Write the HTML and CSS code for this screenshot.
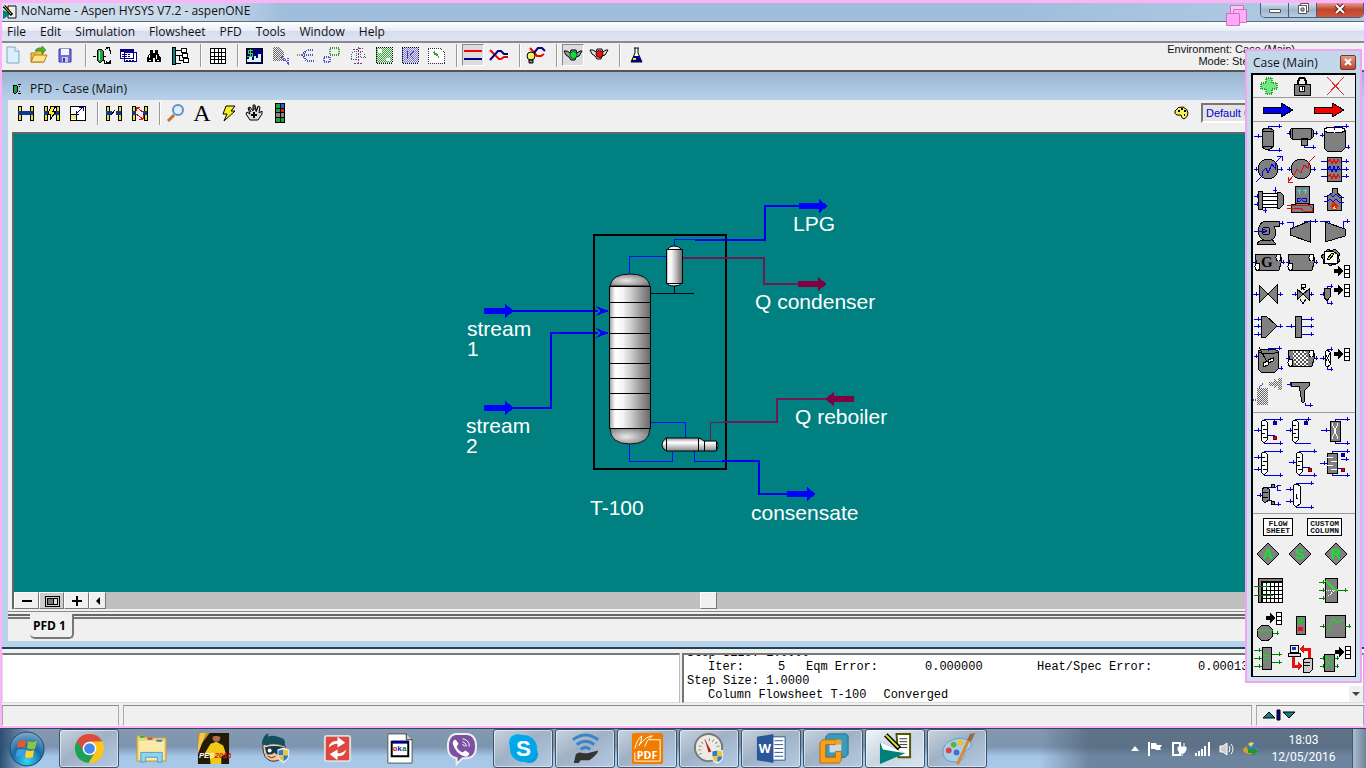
FILE: index.html
```html
<!DOCTYPE html>
<html lang="en">
<head>
    <meta charset="UTF-8">
    <meta name="viewport" content="width=device-width, initial-scale=1.0">
    <title>NoName - Aspen HYSYS V7.2 - aspenONE</title>
    <link rel="stylesheet" href="styles.css">
</head>
<body>
    <!-- Shared fills and symbols -->
    <svg class="defs" width="0" height="0" aria-hidden="true">
        <defs>
            <pattern id="dots" width="2" height="2" patternUnits="userSpaceOnUse"><path d="M0 0h1v1H0zM1 1h1v1H1z" fill="#666"/></pattern>
            <pattern id="greendots" width="2" height="2" patternUnits="userSpaceOnUse"><path d="M0 0h2v2H0z" fill="#e4f4e4"/><path d="M0 0h1v1H0zM1 1h1v1H1z" fill="#40a040"/></pattern>
            <pattern id="bluedots" width="2" height="2" patternUnits="userSpaceOnUse"><path d="M0 0h2v2H0z" fill="#e0e0f8"/><path d="M0 0h1v1H0zM1 1h1v1H1z" fill="#8080d0"/></pattern>
            <pattern id="pack" width="4" height="4" patternUnits="userSpaceOnUse"><path fill="#fff" d="M0 0h4v4H0z"/><path d="M0 0h2v2H0zM2 2h2v2H2z" fill="#555"/></pattern>
            <linearGradient id="steel" x1="0" x2="1" y1="0" y2="0">
                <stop offset="0" stop-color="#a0a0a0"/><stop offset=".14" stop-color="#fff"/><stop offset=".32" stop-color="#f4f4f4"/>
                <stop offset=".55" stop-color="#c8c8c8"/><stop offset=".8" stop-color="#909090"/><stop offset="1" stop-color="#686868"/>
            </linearGradient>
            <linearGradient id="steelv" x1="0" x2="0" y1="0" y2="1">
                <stop offset="0" stop-color="#999"/><stop offset=".35" stop-color="#fff"/><stop offset="1" stop-color="#888"/>
            </linearGradient>
            <radialGradient id="dome" cx=".4" cy=".55" r=".6"><stop offset="0" stop-color="#e8e8e8"/><stop offset="1" stop-color="#808080"/></radialGradient>
            <radialGradient id="orb" cx=".5" cy=".85" r=".9"><stop offset="0" stop-color="#35d5f5"/><stop offset=".5" stop-color="#1b6aa5"/><stop offset="1" stop-color="#8fb4d0"/></radialGradient>
            <symbol id="tocol" viewBox="0 0 16 14"><path d="M0 5h4V2l5 5-5 5V9H0z" fill="#000"/><path d="M10 1h5v12h-5zM10 5h5M10 9h5" fill="#fff" stroke="#000"/></symbol>
            <symbol id="shield" viewBox="0 0 14 16"><path d="M7 0l6 2v6q0 5-6 8-6-3-6-8V2z" fill="#e8eef4"/><path d="M7 2v6H2V3zM7 8h5q0 4-5 6z" fill="#2b7cc9"/><path d="M7 2l5 1v5H7zM2 8h5v6Q2 12 2 8z" fill="#f4c430"/></symbol>
        </defs>
    </svg>

    <div class="window">
        <header class="titlebar">
            <svg class="app-icon" width="14" height="14" viewBox="0 0 14 14"><path fill="#eee" stroke="#111" d="M5 1h8v12H5z"/><path d="M0 5l8 4-8 5z" fill="#00807a"/><path d="M1 1l8 9" stroke="#000" stroke-width="3"/><path d="M1 1l7 8" stroke="#e8e020"/></svg>
            <h1>NoName - Aspen HYSYS V7.2 - aspenONE</h1>
            <div class="caption">
                <button class="cap-btn min" aria-label="Minimize"><svg width="14" height="12" viewBox="0 0 14 12"><path d="M1.500 6.500h11v3h-11z" fill="#fff" stroke="#555"/></svg></button>
                <button class="cap-btn restore" aria-label="Restore"><svg width="14" height="12" viewBox="0 0 14 12"><path d="M4.500 .5h8v8h-8z" fill="#fff" stroke="#555"/><path d="M2.500 2.500h8v8h-8z" fill="#fff" stroke="#555"/><path d="M5 5h3v3H5z" fill="#abc" stroke="#555"/></svg></button>
                <button class="cap-btn close" aria-label="Close"><svg width="14" height="12" viewBox="0 0 14 12"><path d="M3 2l8 8M11 2l-8 8" stroke="#5a2020" stroke-width="4"/><path d="M3 2l8 8M11 2l-8 8" stroke="#fff" stroke-width="2"/></svg></button>
            </div>
        </header>

        <nav class="menubar">
            <button>File</button>
            <button>Edit</button>
            <button>Simulation</button>
            <button>Flowsheet</button>
            <button>PFD</button>
            <button>Tools</button>
            <button>Window</button>
            <button>Help</button>
        </nav>

        <div class="toolbar">
            <button class="tool" aria-label="New"><svg viewBox="0 0 20 20"><path d="M4 2h8l4 4v12H4z" fill="#dceefb" stroke="#7aa6cc"/><path d="M12 2v4h4" fill="#fff" stroke="#7aa6cc"/></svg></button>
            <button class="tool" aria-label="Open"><svg viewBox="0 0 20 20"><path d="M2 8h5l1-2h6v11H2z" fill="#f5c542" stroke="#b07f10"/><path d="M2 17l3-7h13l-3 7z" fill="#ffe38a" stroke="#b07f10"/><path d="M6 6q2-4 7-3V1l4 4-4 4V6q-4-1-7 0z" fill="#4db030" stroke="#2b7a1a" stroke-width=".6"/></svg></button>
            <button class="tool" aria-label="Save"><svg viewBox="0 0 20 20"><path d="M4 4h12v13H4z" fill="#7070d8" stroke="#3838a0"/><path d="M6 4h8v6H6z" fill="#f4f4ff"/><path d="M7 12h6v5H7z" fill="#c8c8e8"/><path d="M8 13h2v4H8z" fill="#3838a0"/></svg></button>
            <span class="sep"></span>
            <button class="tool" aria-label="PFD"><svg class="px" viewBox="0 0 20 20"><path d="M1 11h3M11 11h3M13 5l4-3m-3 0h3v3h1v4M9 15h3v3h6v-3m0 4" class="ink"/><path d="M5 6l2-2h2l2 2v9l-2 2H7l-2-2z" fill="#20a040" stroke="#000"/><path d="M7 6v9" stroke="#bfffbf"/><path d="M14 16l4 3v-3l-4 3z" fill="#000"/></svg></button>
            <button class="tool" aria-label="Workbook"><svg class="px" viewBox="0 0 20 20"><path d="M6 7h12v9H6zM2 4h13v9H2z" fill="#fff" stroke="#000080"/><path d="M2 4h13v3H2z" fill="#000080"/><path d="M4 9h9M4 11h9M8 15h8" stroke="#000080" stroke-dasharray="2 1"/></svg></button>
            <button class="tool" aria-label="Find"><svg class="px" viewBox="0 0 20 20"><path d="M6 5h3v3h2V5h3v3l3 5v4h-6v-4H9v4H3v-4l3-5z" fill="#000"/><path d="M6 10l-1 3M12 10v4M5 15h2M13 15h2" stroke="#fff"/></svg></button>
            <button class="tool" aria-label="Navigator"><svg class="px" viewBox="0 0 20 20"><path d="M2 2h3v17H2z" fill="#008b8b" stroke="#000"/><path d="M5 5h6M5 10h4v5h5M9 10h3M5 18h6" class="ink"/><path d="M11 3h5v4h-5zM12 8h5v4h-5zM13 13h5v4h-5z" fill="#fff" stroke="#000"/></svg></button>
            <span class="sep"></span>
            <button class="tool" aria-label="Grid"><svg class="px" viewBox="0 0 20 20"><path d="M3 3h15v15H3zM7 3v15M11 3v15M14 3v15M3 7h15M3 11h15M3 14h15" fill="#fff" stroke="#000"/></svg></button>
            <span class="sep"></span>
            <button class="tool" aria-label="Economics"><svg class="px" viewBox="0 0 20 20"><path d="M2 3h16v15H2z" fill="#000080" stroke="#000"/><path d="M9 5H4v3h4v3H3M6 4v8" stroke="#30e030" fill="none"/><path d="M3 17v-3h2v-2h3v3h2v-4h2v2h2V9h3v8z" fill="#dff4f4"/></svg></button>
            <button class="tool" aria-label="Stop sizing"><svg class="px" viewBox="0 0 20 20"><path d="M3 2h7l4 5v9H3z" fill="url(#dots)"/><path d="M12 12l6 6v-5" class="bdot"/></svg></button>
            <button class="tool" aria-label="Split"><svg class="px" viewBox="0 0 20 20"><path d="M1 10h5" class="odot"/><path d="M6 10l5-5h7M6 10h12M6 10l5 6h7" class="bdot"/></svg></button>
            <button class="tool" aria-label="Link"><svg class="px" viewBox="0 0 20 20"><path d="M8 3h9v7H8z" class="gdot"/><path d="M2 12h6v5H2z" class="bdot"/></svg></button>
            <button class="tool" aria-label="Balance"><svg class="px" viewBox="0 0 20 20"><path d="M10 2v16M5 5l10-2M6 18h8" stroke="#704080" stroke-dasharray="2 1" fill="none"/><path d="M3 14q0-8 5-8v8zM12 6q5 0 5 6h-5z" stroke="#555590" stroke-dasharray="1 1" fill="none"/></svg></button>
            <button class="tool" aria-label="Heat"><svg class="px" viewBox="0 0 20 20"><path d="M2 2h16v16H2z" fill="url(#greendots)" stroke="#000" stroke-dasharray="1 1"/><path d="M4 4h4v4H4zM12 13h4v3h-4z" fill="#fff"/></svg></button>
            <button class="tool" aria-label="Rewind"><svg class="px" viewBox="0 0 20 20"><path d="M2 2h16v16H2z" fill="url(#bluedots)" stroke="#000" stroke-dasharray="1 1"/><path d="M7 6v8M14 6l-4 4 4 4" stroke="#4040b0" fill="none"/></svg></button>
            <button class="tool" aria-label="Case file"><svg class="px" viewBox="0 0 20 20"><path d="M2 3h12l4 4v11H2z" fill="#fff" stroke="#333" stroke-dasharray="1 1"/><path d="M8 7l5 5M8 9h3l2 4" class="gdot"/></svg></button>
            <span class="sep"></span>
            <button class="tool pressed" aria-label="Steady state"><svg viewBox="0 0 20 20"><path d="M1 6h18" stroke="#f00000" stroke-width="2"/><path d="M1 14h18" stroke="#000080" stroke-width="2"/></svg></button>
            <button class="tool" aria-label="Dynamics"><svg viewBox="0 0 20 20"><path d="M1 5l9 9h2l3-2h4" fill="none" stroke="#f00000" stroke-width="2"/><path d="M1 15l8-9h3l3 3h4" fill="none" stroke="#000080" stroke-width="2"/></svg></button>
            <span class="sep"></span>
            <button class="tool" aria-label="Dynamics assistant"><svg viewBox="0 0 20 20"><path d="M4 3l7 8h4l3-2" fill="none" stroke="#f00000" stroke-width="2"/><path d="M7 9l5-6h4l3 3" fill="none" stroke="#000080" stroke-width="2"/><circle cx="5" cy="11" r="4" fill="#f0f060" stroke="#000"/><path d="M3 15h4v3H3z" fill="#888" stroke="#000"/></svg></button>
            <span class="sep"></span>
            <button class="tool pressed" aria-label="Solver active"><svg viewBox="0 0 20 20"><path d="M1 6h3l3 2 1-3h5l1 3 3-2h2l-3 5-3 1-1 3H8l-2-3-3-2z" fill="#999" stroke="#000"/><circle cx="10.500" cy="10" r="3.500" fill="#10e030" stroke="#063"/></svg></button>
            <button class="tool" aria-label="Solver holding"><svg viewBox="0 0 20 20"><path d="M1 5h3l3 2 1-3h5l1 3 3-2h2l-3 5-3 1-1 3H8l-2-3-3-2z" fill="#ddd" stroke="#000"/><circle cx="10.500" cy="9" r="3.500" fill="#e81010" stroke="#500"/></svg></button>
            <span class="sep"></span>
            <button class="tool" aria-label="Basis environment"><svg viewBox="0 0 20 20"><path d="M8 3h5M9 3v5l-4 9h11l-4-9V3" fill="#fff" stroke="#000"/><path d="M8 11h5l3 6H5z" fill="#000080"/><path d="M7 13h3v2H7z" fill="#f0e020"/></svg></button>
            <div class="env">
                <div>Environment: Case (Main)</div>
                <div>Mode: Steady State</div>
            </div>
        </div>

        <!-- PFD child window -->
        <section class="child">
            <div class="child-title">
                <svg class="px" width="12" height="12" viewBox="0 0 12 12"><path d="M2 3l1-1h2l1 1v6l-1 1H3L2 9z" fill="#20a040" stroke="#000"/><path d="M7 1h3M8 3h1M7 10h3M8 8h1" class="ink"/></svg>
                <h2>PFD - Case (Main)</h2>
            </div>
            <div class="child-body">
                <div class="toolbar pfd-toolbar">
                    <button class="tool" aria-label="Attach mode"><svg class="px" viewBox="0 0 20 20"><path d="M2 3h3v14H2zM14 3h3v14h-3z" fill="#e8e020" stroke="#000"/><path d="M2 8h15v4H2z" fill="#103890"/></svg></button>
                    <button class="tool" aria-label="Auto attach"><svg class="px" viewBox="0 0 20 20"><path d="M2 3h3v14H2zM14 3h3v14h-3z" fill="#e8e020" stroke="#000"/><path d="M2 8h15v4H2z" fill="#103890"/><path d="M9 3h5l-3 5h3l-6 9 1-6H6z" fill="#f8f030" stroke="#000"/></svg></button>
                    <button class="tool" aria-label="Size mode"><svg class="px" viewBox="0 0 20 20"><path d="M2 3h15v14H2zM2 11h6v6" fill="#fff" stroke="#000"/><path d="M3 12h5v4H3z" fill="#f0e860"/><path d="M8 11l7-7m-4 0h4v4M8 8v3h3" fill="none" stroke="#000080"/></svg></button>
                    <span class="sep"></span>
                    <button class="tool" aria-label="Break connection"><svg class="px" viewBox="0 0 20 20"><path d="M2 3h3v14H2zM14 3h3v14h-3z" fill="#e8e020" stroke="#000"/><path d="M2 8h6v4H2zM12 8h5v4h-5z" fill="#103890"/><path d="M7 12l4-5" stroke="#000"/></svg></button>
                    <button class="tool" aria-label="Swap connections"><svg class="px" viewBox="0 0 20 20"><path d="M2 3h3v14H2zM14 3h3v14h-3z" fill="#e8e020" stroke="#000"/><path d="M2 8h4v4H2zM13 8h4v4h-4z" fill="#103890"/><path d="M6 4l7 5M6 4v4M6 4h4M13 16l-7-5M13 16v-4M13 16H9" fill="none" stroke="#e01010"/></svg></button>
                    <span class="sep"></span>
                    <button class="tool" aria-label="Zoom"><svg viewBox="0 0 20 20"><path d="M2 18l6-6" stroke="#c07030" stroke-width="3"/><circle cx="12" cy="7" r="5" fill="#d8f0ff" stroke="#6890c0" stroke-width="2"/></svg></button>
                    <button class="tool letter" aria-label="Add text">A</button>
                    <button class="tool" aria-label="Quick route"><svg viewBox="0 0 20 20"><path d="M8 3h9l-4 5h4L6 18l3-7H5z" fill="#f8f020" stroke="#000"/></svg></button>
                    <button class="tool" aria-label="Pan"><svg viewBox="0 0 20 20"><path d="M6 17l-4-6 1-2 3 2-2-6 2-1 3 4V2h2l1 6 2-5 2 1-1 6 3-2v3l-4 6z" fill="#ddd" stroke="#000"/><path d="M10 3v4M5 5l2 4M14 4l-2 5" stroke="#000"/><path d="M10 9v6M7 12h6" stroke="#000" stroke-width="2"/></svg></button>
                    <button class="tool" aria-label="Colour blocks"><svg class="px" viewBox="0 0 20 20"><path d="M5 0h10v20H5z" fill="#000"/><path d="M6 1h4v4H6zM6 6h4v3H6z" fill="#20a040"/><path d="M11 1h3v4h-3z" fill="#2060d0"/><path d="M11 6h3v3h-3z" fill="#e02020"/><path d="M6 10h4v4H6zM11 10h3v4h-3z" fill="#888"/><path d="M6 15h4v4H6zM11 15h3v4h-3z" fill="#20a040"/></svg></button>
                    <div class="scheme">
                        <svg width="16" height="16" viewBox="0 0 16 16"><path d="M2 6q3-5 8-4 5 2 5 6t-4 6q-3-1-3-4-7 1-6-4z" fill="#f4f060" stroke="#000"/><path d="M5 6h2M8 4h2M11 6h2M11 10h1" stroke="#000" stroke-width="2"/></svg>
                        <select aria-label="Colour scheme"><option>Default Colour Scheme</option></select>
                    </div>
                </div>

                <div class="canvas">
                    <svg class="flow" width="440" height="340" viewBox="460 190 440 340" role="img" aria-label="Process flow diagram">
                        <g class="px">
                            <!-- inlet streams -->
                            <path class="stream" d="M512 311h86M512 408h39v-75h47"/>
                            <path class="head" d="M484 308h21v-4l9 7-9 7v-4h-21zM484 405h21v-4l9 7-9 7v-4h-21z"/>
                            <!-- column environment -->
                            <path class="frame" d="M594 235h132v234H594z"/>
                            <path class="head" d="M596 306l13 5-13 5 4-5zM596 328l13 5-13 5 4-5z"/>
                            <path class="inner" d="M629.500 274v-17.500h37M674.500 247v-7.500h21M651 422.500h34.500v16M629.500 444v17.500h43v-10M694.500 451v10.500h29"/>
                            <path class="stream" d="M695 240h70v-34h35M722 461h37v33h30"/>
                            <path class="energy" d="M682 258h82v26h36M723 422h54v-23h50"/>
                            <path class="energy thin" d="M710.500 440v-17.500h14"/>
                            <path class="head" d="M799 203h20v-4l9 7-9 7v-4h-20zM787 491h20v-4l9 7-9 7v-4h-20z"/>
                            <path class="qhead" d="M798 281h20v-4l9 7-9 7v-4h-20zM854 396h-20v-4l-9 7 9 7v-4h20z"/>
                            <path class="ink" d="M651 293.500h43M674.500 285v8"/>
                        </g>
                        <!-- tower -->
                        <path d="M610 286q2-12 20-12t20 12z" fill="url(#dome)" stroke="#111"/>
                        <path d="M610 428q0 16 20 16t20-16z" fill="url(#dome)" stroke="#111"/>
                        <path d="M609.500 286.500h41v142h-41z" fill="url(#steel)" stroke="#000"/>
                        <path class="px" d="M610 302.500h41M610 317.500h41M610 333.500h41M610 348.500h41M610 363.500h41M610 378.500h41M610 393.500h41M610 409.500h41" stroke="#000"/>
                        <!-- condenser and reboiler -->
                        <path d="M668 249q1-3 6-3t7 3l1 34q-2 3-8 3t-7-3z" fill="#eee" stroke="#000"/>
                        <path d="M666.500 249.500h16v34h-16z" fill="url(#steel)" stroke="#000"/>
                        <path d="M666 438h32q3 0 6 3h12q4 4 0 10h-50q-8-6 0-13z" fill="url(#steelv)" stroke="#000"/>
                        <path d="M666.500 438v13M698.500 438v13M704.500 441v10M716.500 441v10" stroke="#000"/>
                        <g class="labels">
                            <text x="467" y="336">stream</text><text x="467" y="356">1</text>
                            <text x="466" y="433">stream</text><text x="466" y="453">2</text>
                            <text x="793" y="231">LPG</text>
                            <text x="755" y="309">Q condenser</text>
                            <text x="795" y="424">Q reboiler</text>
                            <text x="590" y="515">T-100</text>
                            <text x="751" y="520">consensate</text>
                        </g>
                    </svg>
                </div>

                <div class="hscroll">
                    <button aria-label="Zoom out"><svg class="px" width="12" height="12" viewBox="0 0 12 12"><path d="M1 5h10v2H1z"/></svg></button>
                    <button aria-label="Zoom all" class="overview"><svg class="px" width="16" height="12" viewBox="0 0 16 12"><path d="M1 1h14v10H1z" fill="#ccc" stroke="#000"/><path d="M3 3h6v6H3z" fill="#777" stroke="#000"/><path d="M9 3h4v6H9z" fill="#ddd" stroke="#000"/></svg></button>
                    <button aria-label="Zoom in"><svg class="px" width="12" height="12" viewBox="0 0 12 12"><path d="M1 5h4V1h2v4h4v2H7v4H5V7H1z"/></svg></button>
                    <button aria-label="Scroll left" class="small"><svg width="8" height="8" viewBox="0 0 8 8"><path d="M6 0v8L2 4z"/></svg></button>
                    <div class="track"><span class="thumb"></span></div>
                </div>
                <div class="tabs">
                    <button class="tab">PFD 1</button>
                </div>
            </div>
        </section>

        <div class="panes">
            <div class="pane messages"></div>
            <div class="pane trace">
                <div class="line">Step Size: 1.0000</div>
                <div class="line cols"><span>Iter:</span><span>5</span><span>Eqm Error:</span><span>0.000000</span><span>Heat/Spec Error:</span><span>0.000133</span></div>
                <div class="line">Step Size: 1.0000</div>
                <div class="line indent"><span>Column Flowsheet T-100</span><span>Converged</span></div>
                <button class="vdown" aria-label="Scroll down"><svg width="8" height="4" viewBox="0 0 8 4"><path d="M0 0h8L4 4z" fill="#444"/></svg></button>
            </div>
        </div>

        <footer class="status">
            <div class="cell short"></div>
            <div class="cell wide"></div>
            <div class="cell arrows"><svg width="34" height="12" viewBox="0 0 34 12"><path d="M1 9h12L7 3zM21 3h12l-6 6z" fill="#108080" stroke="#000"/><path d="M15 1h3v10h-3z" fill="#000080" stroke="#000"/></svg></div>
        </footer>
    </div>

    <!-- Window marker over the title bar -->
    <svg class="marker" width="22" height="22" viewBox="0 0 22 22"><path d="M4.500 .5h13v13h-13z" fill="#fbc4f4" stroke="#d070c8"/><path d="M7.500 4.500h13v13h-13z" fill="#fbb0f4" stroke="#d070c8"/><path d="M.5 8.500h13v12H.5z" fill="#ffa8f8" stroke="#d070c8"/></svg>

    <!-- Object palette -->
    <aside class="palette">
        <div class="palette-title">
            <h2>Case (Main)</h2>
            <button class="palette-close" aria-label="Close palette"><svg width="8" height="8" viewBox="0 0 8 8"><path d="M1 1l6 6M7 1L1 7" stroke="#fff" stroke-width="2"/></svg></button>
        </div>
        <div class="palette-body px">
            <div class="group edit">
                <button aria-label="Add"><svg width="32" height="22" viewBox="0 0 32 22"><path d="M13 3h6v5h5v6h-5v5h-6v-5H8V8h5z" fill="#70e880"/><path d="M13 3h6v5h5v6h-5v5h-6v-5H8V8h5z" class="gdot"/></svg></button>
                <button aria-label="Lock"><svg width="32" height="22" viewBox="0 0 32 22"><path d="M12 10V6l2-3h4l2 3v4" fill="none" stroke="#000" stroke-width="2"/><path d="M8 9h16v11H8z" fill="#808080" stroke="#000"/><circle cx="16" cy="14" r="3" fill="#fff" stroke="#000"/><path d="M16 12v3" stroke="#000"/></svg></button>
                <button aria-label="Delete"><svg width="32" height="22" viewBox="0 0 32 22"><path d="M8 2l17 18M25 2L8 20" stroke="#d03030"/></svg></button>
            </div>
            <div class="group streams">
                <button aria-label="Material stream"><svg width="34" height="16" viewBox="0 0 34 16"><path d="M1 5h18V1l12 7-12 7v-4H1z" fill="#0000e8" stroke="#000"/></svg></button>
                <button aria-label="Energy stream"><svg width="34" height="16" viewBox="0 0 34 16"><path d="M1 5h18V1l12 7-12 7v-4H1z" fill="#f80000" stroke="#000"/></svg></button>
            </div>
            <div class="group units">
                <button aria-label="Separator"><svg width="32" height="32" viewBox="0 0 32 32"><path class="pipe" d="M1 14h8m-4-2v4M15 6V4h14m-3-2v4M15 27v1h14m-3-2v4"/><path class="unit" d="M9 8l3-2h5l3 2v17l-3 2h-5l-3-2zM9 9h11M9 24h11"/></svg></button>
                <button aria-label="3-phase separator"><svg width="32" height="32" viewBox="0 0 32 32"><path class="pipe" d="M1 11h5m-3-2v4M27 11h5m-2-2v4M18 23v2h12m-3-2v4"/><path class="unit" d="M15 16h6v7h-6zM4 8l2-2h19l2 2v7l-2 2H6l-2-2zM6 6v11M25 6v11"/></svg></button>
                <button aria-label="Tank"><svg width="32" height="32" viewBox="0 0 32 32"><path class="unit" d="M5 8v18l3 3h15l3-3V8z"/><ellipse cx="15.500" cy="8" rx="10.500" ry="3" fill="#fff" stroke="#000"/><path class="pipe" d="M1 13h4m-2-2v4M15 8V4h15m-3-2v4M26 25h5m-2-2v4"/></svg></button>

                <button aria-label="Cooler"><svg width="32" height="32" viewBox="0 0 32 32"><circle class="unit" cx="15" cy="16" r="10"/><path class="pipe" d="M1 16h4m-2-2v4M25 16h5m-2-2v4M3 29l6-6v-4l4-4 2 5 4-9 3 4v-5l7-7m-5 0h5v5"/></svg></button>
                <button aria-label="Heater"><svg width="32" height="32" viewBox="0 0 32 32"><circle class="unit" cx="15" cy="16" r="10"/><path class="pipe" d="M1 16h4m-2-2v4M25 16h5m-2-2v4"/><path class="hot" d="M29 3l-7 7v5l-4-3-3 8-4-4-3 6-6 7m0-5v5h5"/></svg></button>
                <button aria-label="LNG exchanger"><svg width="32" height="32" viewBox="0 0 32 32"><path class="unit" d="M8 4h14v24H8z"/><path class="pipe" d="M2 8h6M22 8h8m-3-2v4M2 16h28m-3-2v4M2 23h6M22 23h8m-3-2v4M9 16l2-3 2 6 2-6 2 6 2-6 2 4"/><path class="hot" d="M9 9l2-3 2 5 2-5 2 5 2-5 2 4M9 24l2-3 2 5 2-5 2 5 2-5 2 4"/></svg></button>

                <button aria-label="Heat exchanger"><svg width="32" height="32" viewBox="0 0 32 32"><path class="pipe" d="M1 12h5m-2-2v4M1 20h5m-2-2v4M22 3v6m-2-3h4M12 23v6m-2-3h4"/><path class="unit" d="M5 7h4v18H5zM24 8h3l3 3v10l-3 3h-3z"/><path d="M9 9h15v14H9z" fill="#fff" stroke="#000"/><path class="ink" d="M9 12h15M9 16h15M9 20h15"/></svg></button>
                <button aria-label="Air cooler"><svg width="32" height="32" viewBox="0 0 32 32"><path class="unit" d="M9 2h13v18h5v8H5v-8h4z"/><path class="unit" d="M9 2h14v17H9z"/><path d="M13 10V5m-2 1h4M19 10V5m-2 1h4" stroke="#30e0f0" fill="none"/><path class="pipe" d="M11 14h3l3 3h3v-3h-3l-3 3h-3z"/><path class="hot" d="M1 21h22l3 3v3h-9l-2-3H1"/></svg></button>
                <button aria-label="Fired heater"><svg width="32" height="32" viewBox="0 0 32 32"><path class="unit" d="M13 4h5v5l4 3v14H8V12l5-3z"/><path class="pipe" d="M5 12h4l2-2 3 3 3-3 3 3h5M5 17h4l2-2 3 3 3-3 3 3h5"/><path d="M15 17l4 5-2 4h-3l-2-4z" fill="#e82010"/><path d="M15 21l2 4h-3z" fill="#ffe030"/></svg></button>

                <button aria-label="Pump"><svg width="32" height="32" viewBox="0 0 32 32"><path class="unit" d="M7 26L4 28v1h18v-1l-3-4z"/><path class="unit" d="M13 6h13v5h-5q3 7 0 12-4 4-10 2-5-2-6-9 1-9 8-10z"/><circle class="unit" cx="13" cy="16" r="4"/><path class="pipe" d="M1 16h13m-4-2l4 2-4 2M26 8h5m-2-2v4"/></svg></button>
                <button aria-label="Compressor"><svg width="32" height="32" viewBox="0 0 32 32"><path class="unit" d="M4 14l20-8v21L4 20z"/><path class="pipe" d="M1 7h6v6M18 8V6h14m-3-2v4"/></svg></button>
                <button aria-label="Expander"><svg width="32" height="32" viewBox="0 0 32 32"><path class="unit" d="M6 7l20 7v7L6 27z"/><path class="pipe" d="M1 6h9v3M24 13V6h7m-3-2v4"/></svg></button>

                <button aria-label="Gas pipe"><svg width="32" height="32" viewBox="0 0 32 32"><path class="pipe" d="M0 15h4m-2-2v4M27 15h5m-2-2v4"/><path class="unit" d="M3 7h23l2 3v6l-2 7H3l-1-4 2-3-2-6z"/><ellipse cx="4.500" cy="19.500" rx="2.500" ry="3.500" fill="#fff" stroke="#000"/><ellipse cx="25.500" cy="10.500" rx="2.500" ry="3.500" fill="#fff" stroke="#000"/><text x="8" y="20" class="glyph">G</text></svg></button>
                <button aria-label="Pipe segment"><svg width="32" height="32" viewBox="0 0 32 32"><path class="pipe" d="M0 15h4m-2-2v4M27 15h5m-2-2v4"/><path class="unit" d="M3 7h23l2 3v6l-2 7H3l-1-4 2-3-2-6z"/><ellipse cx="4.500" cy="19.500" rx="2.500" ry="3.500" fill="#fff" stroke="#000"/><ellipse cx="25.500" cy="10.500" rx="2.500" ry="3.500" fill="#fff" stroke="#000"/></svg></button>
                <button aria-label="Piping sub-palette"><svg width="32" height="32" viewBox="0 0 32 32"><path d="M9 2l3 2 4-2 5 5-2 3 2 4-4 3h-3l-3 2-3-3H4v-4L2 9l3-2z" fill="#808080" stroke="#000"/><path d="M5 4h9l4 3v9H5z" fill="#fff" stroke="#000"/><path d="M8 12l5-6 2 1-5 6z" fill="#f0e040" stroke="#000"/><use href="#tocol" x="15" y="17" width="16" height="14"/></svg></button>

                <button aria-label="Valve"><svg width="32" height="32" viewBox="0 0 32 32"><path class="pipe" d="M0 15h6m-3-2v4M24 15h6m-3-2v4"/><path class="unit" d="M6 6l9 9-9 9zM24 6l-9 9 9 9z"/></svg></button>
                <button aria-label="Relief valve"><svg width="32" height="32" viewBox="0 0 32 32"><path class="pipe" d="M6 15h6m-3-2v4M22 15h6m-3-2v4"/><path class="unit" d="M11 10l6 5-6 6zM23 10l-6 5 6 6z"/><path class="ink" d="M15 11V5h4v3h-4l4 3M14 20l3 5 3-5"/></svg></button>
                <button aria-label="Solids sub-palette"><svg width="32" height="32" viewBox="0 0 32 32"><path class="pipe" d="M1 15h5m-2-2v4M8 9V7h6m-2-2v4M8 22v2h6m-2-2v4"/><path class="unit" d="M5 9h6v9l-3 4-3-4z"/><use href="#tocol" x="15" y="4" width="16" height="14"/></svg></button>

                <button aria-label="Mixer"><svg width="32" height="32" viewBox="0 0 32 32"><path class="pipe" d="M1 8h7m-3-2v4M1 15h7m-3-2v4M1 23h7m-3-2v4M23 15h7m-3-2v4"/><path class="unit" d="M8 5h5l10 9v2l-10 10H8z"/></svg></button>
                <button aria-label="Tee"><svg width="32" height="32" viewBox="0 0 32 32"><path class="pipe" d="M0 15h9m-4-2v4M15 8h13m-3-2v4M15 15h13m-3-2v4M15 23h13m-3-2v4"/><path class="unit" d="M9 5h6v21H9z"/></svg></button>
                <span></span>

                <button aria-label="CSTR"><svg width="32" height="32" viewBox="0 0 32 32"><path class="unit" d="M5 8v18l3 3h14l3-3V8l-4-2H9z"/><path class="pipe" d="M1 13h4m-2-2v4M15 8V5h14m-3-2v4M25 25h5m-2-2v4"/><path class="ink" d="M6 4l8 15M5 9q10 4 20 0"/><path d="M10 20l5-2v4l-5 2zM15 17l5-2v3l-5 2z" fill="#fff" stroke="#000"/></svg></button>
                <button aria-label="Plug flow reactor"><svg width="32" height="32" viewBox="0 0 32 32"><path class="pipe" d="M0 15h4m-2-2v4M27 15h5m-2-2v4"/><path class="unit" d="M3 7h23l2 3v6l-2 7H3l-1-4 2-3-2-6z"/><path d="M7 8h12l3 6v9H10l-3-7z" fill="url(#pack)"/><ellipse cx="4.500" cy="19.500" rx="2.500" ry="3.500" fill="#fff" stroke="#000"/><ellipse cx="25.500" cy="10.500" rx="2.500" ry="3.500" fill="#fff" stroke="#000"/></svg></button>
                <button aria-label="Reactor sub-palette"><svg width="32" height="32" viewBox="0 0 32 32"><path class="pipe" d="M1 15h5m-2-2v4M8 8V6h6m-2-2v4M8 24v2h6m-2-2v4"/><path d="M6 9l2-2 3 2v13l-3 2-2-2z" fill="#fff" stroke="#000"/><path class="ink" d="M6 10l5 10M11 10L6 20"/><use href="#tocol" x="15" y="4" width="16" height="14"/></svg></button>

                <button aria-label="Electrolyte"><svg width="32" height="32" viewBox="0 0 32 32"><path d="M4 12h11v17H4zM16 6h5V3l5 5-5 5v-3h-5zM25 2h4v12h-4z" fill="url(#dots)"/><path class="bdot" d="M0 24h4M6 11l4-3"/></svg></button>
                <button aria-label="Flare tip"><svg width="32" height="32" viewBox="0 0 32 32"><path class="pipe" d="M1 8h6m-3-2v4M19 27v2h8m-3-2v4"/><path class="unit" d="M5 6h18v4l-4 4-1 12h-2l-3-16H5z"/></svg></button>
                <span></span>
            </div>
            <div class="group columns">
                <button aria-label="Distillation column"><svg width="32" height="32" viewBox="0 0 32 32"><path class="pipe" d="M1 15h7m-3-2v4M11 6V4h19m-3-2v4M14 20h7v4M11 26v2h19m-3-2v4M21 5v3"/><path class="tower" d="M8 7l2-2h2l2 2v18l-2 2h-2l-2-2zM8 10h4M10 14h4M8 18h4M10 22h4"/><circle class="cold-dot" cx="22" cy="8" r="2"/><circle class="hot-dot" cx="22" cy="23" r="2"/></svg></button>
                <button aria-label="Refluxed absorber"><svg width="32" height="32" viewBox="0 0 32 32"><path class="pipe" d="M0 15h7m-3-2v4M9 6V4h16m-3-2v4M9 26v2h16M20 5v3"/><path class="tower" d="M6 7l2-2h2l2 2v18l-2 2H8l-2-2zM6 10h4M8 14h4M6 18h4M8 22h4"/><circle class="cold-dot" cx="20" cy="8" r="2"/></svg></button>
                <button aria-label="Short cut column"><svg width="32" height="32" viewBox="0 0 32 32"><path class="pipe" d="M2 15h9m-4-2v4M16 6V4h15m-3-2v4M16 26v2h15m-3-2v4"/><path class="unit" d="M11 6h10v20H11z"/><path d="M13 8l6 16M19 8l-6 16" stroke="#fff"/></svg></button>

                <button aria-label="Absorber"><svg width="32" height="32" viewBox="0 0 32 32"><path class="pipe" d="M1 10h7m-3-2v4M1 22h7m-3-2v4M11 6V4h19m-3-2v4M11 26v2h19m-3-2v4"/><path class="tower" d="M8 7l2-2h2l2 2v18l-2 2h-2l-2-2zM8 10h4M10 14h4M8 18h4M10 22h4"/></svg></button>
                <button aria-label="Reboiled absorber"><svg width="32" height="32" viewBox="0 0 32 32"><path class="pipe" d="M3 15h7m-3-2v4M13 6V4h18m-3-2v4M16 20h7v4M13 26v2h18m-3-2v4"/><path class="tower" d="M10 7l2-2h2l2 2v18l-2 2h-2l-2-2zM10 10h4M12 14h4M10 18h4M12 22h4"/><circle class="hot-dot" cx="24" cy="23" r="2"/></svg></button>
                <button aria-label="3-phase distillation"><svg width="32" height="32" viewBox="0 0 32 32"><path class="pipe" d="M1 16h7m-3-2v4M13 6V4h18m-3-2v4M22 12h8m-3-2v4M18 21h8M13 26v2h18m-3-2v4"/><path class="unit" d="M8 6h10v20H8z"/><path d="M8 10h6M12 14h6M8 18h6M12 22h6" stroke="#fff"/><circle class="cold-dot" cx="24" cy="8" r="2"/><circle class="hot-dot" cx="24" cy="23" r="2"/></svg></button>

                <button aria-label="Component splitter"><svg width="32" height="32" viewBox="0 0 32 32"><path class="pipe" d="M4 16h6m-3-2v4M14 8h9l3-2h2m-4 0v5h4M15 21h3v4h10m-3-2v4"/><path class="unit" d="M9 10l3-2 4 2v11l-4 3-3-3zM9 13h6M9 18h6"/><circle class="unit" cx="20" cy="7" r="2"/><circle class="unit" cx="20" cy="24" r="2"/></svg></button>
                <button aria-label="Liquid-liquid extractor"><svg width="32" height="32" viewBox="0 0 32 32"><path class="pipe" d="M0 10h7m-3-2v4M0 22h7m-3-2v4M10 6V4h18m-3-2v4M10 26v2h18m-3-2v4"/><path class="tower" d="M7 7l2-2h2l3 2v18l-3 2H9l-2-2zM10 15v4h2"/></svg></button>
                <span></span>
            </div>
            <div class="group logical">
                <div class="pair">
                    <button class="sheet">FLOW<br>SHEET</button>
                    <button class="sheet">CUSTOM<br>COLUMN</button>
                </div>
                <button aria-label="Adjust"><svg width="32" height="32" viewBox="0 0 32 32"><path class="unit" d="M15 5l11 11-11 11L4 16z"/><text class="green-letter" x="15" y="21">A</text></svg></button>
                <button aria-label="Set"><svg width="32" height="32" viewBox="0 0 32 32"><path class="unit" d="M14 5l11 11-11 11L3 16z"/><text class="green-letter" x="14" y="21">S</text></svg></button>
                <button aria-label="Recycle"><svg width="32" height="32" viewBox="0 0 32 32"><path class="unit" d="M17 5l11 11-11 11L6 16z"/><text class="green-letter" x="17" y="21">R</text></svg></button>

                <button aria-label="Spreadsheet"><svg width="32" height="32" viewBox="0 0 32 32"><path d="M5 4h24v24H5z" fill="#fff" stroke="#000"/><path class="ink" d="M9 4v24M13 4v24M17 4v24M21 4v24M25 4v24M5 8h24M5 12h24M5 16h24M5 20h24M5 24h24"/><path class="unit" d="M5 4h24v3H8v21H5z"/><path class="sig" d="M1 12h15m-3-2v4M1 21h19m-3-2v4"/></svg></button>
                <span></span>
                <button aria-label="Selector"><svg width="32" height="32" viewBox="0 0 32 32"><path class="sig" d="M0 8h6m-2-2v4M0 16h6m-2-2v4M0 24h6m-2-2v4M18 16h11m-3-2v4"/><path class="unit" d="M6 4h12v24H6z"/><path d="M7 7l9 9h3" stroke="#20e030" stroke-width="2" fill="none"/><path d="M16 16H7M16 16l-9 8" stroke="#fff" stroke-dasharray="1 1"/></svg></button>

                <button aria-label="Controller"><svg width="32" height="32" viewBox="0 0 32 32"><circle class="unit" cx="12" cy="23" r="8"/><path d="M4 20h16" stroke="#10e020"/><path class="sig" d="M20 23h6m-2-2v4"/><use href="#tocol" x="13" y="1" width="16" height="14"/></svg></button>
                <button aria-label="Digital point"><svg width="32" height="32" viewBox="0 0 32 32"><path class="unit" d="M10 6h9v18h-9z"/><circle cx="14.500" cy="11" r="2.500" fill="#10d020"/><circle cx="14.500" cy="19" r="2.500" fill="#e81010"/></svg></button>
                <button aria-label="Transfer function"><svg width="32" height="32" viewBox="0 0 32 32"><path class="unit" d="M6 5h20v22H6z"/><path class="sig" d="M1 16h5m-2-2v4M26 16h6m-2-2v4"/><path d="M7 21l3-1 3-11h2l3 4 4-3h3" stroke="#10e020" fill="none"/></svg></button>

                <button aria-label="Boolean gate"><svg width="32" height="32" viewBox="0 0 32 32"><path class="sig" d="M1 7h8m-3-2v4M1 15h8m-3-2v4M1 23h8m-3-2v4M18 11h11m-3-2v4M18 19h11m-3-2v4"/><path class="unit" d="M9 4h9v22H9z"/><path d="M10 12h7M10 15h7" stroke="#10e020"/></svg></button>
                <button aria-label="Data exchange"><svg width="32" height="32" viewBox="0 0 32 32"><path d="M4 2h8v7H4z" fill="#eee" stroke="#000"/><path d="M6 4h4v3H6z" fill="#1030d0"/><path d="M2 10h12v3H2z" fill="#ddd" stroke="#000"/><path d="M23 15V6h-6M7 14v9h5" stroke="#e81010" stroke-width="3" fill="none"/><path d="M13 6l5-4v8zM17 23l-5-4v8z" fill="#e81010"/><path d="M17 17l3-2h6v12l-2 2h-7z" fill="#ccc" stroke="#000"/><path class="ink" d="M18 19h6M18 22h6"/></svg></button>
                <button aria-label="External data"><svg width="32" height="32" viewBox="0 0 32 32"><path class="sig" d="M1 15h5m-2-2v4M1 23h5m-2-2v4M15 15h5m-2-2v4M15 23h5m-2-2v4"/><path class="unit" d="M5 11h10v17H5z"/><path d="M6 13h3M7 13v6M12 20v5M6 26l8-13" stroke="#10e020"/><use href="#tocol" x="16" y="2" width="16" height="14"/></svg></button>
            </div>
        </div>
    </aside>

    <!-- Taskbar -->
    <div class="taskbar">
        <button class="start" aria-label="Start"><svg width="38" height="38" viewBox="0 0 38 38"><circle cx="19" cy="19" r="17" fill="url(#orb)" stroke="#17476e"/><path d="M10 12q4-3 8-1l-1 7q-4-2-8 0z" fill="#e8582a"/><path d="M20 11q4 2 9 0l-2 8q-4 1-8-1z" fill="#8cc63f"/><path d="M9 20q4-2 8 0l-1 7q-4-2-8 0z" fill="#3aa0e8"/><path d="M18 20q4 2 8 0l-1 7q-4 2-8 0z" fill="#fcd232"/></svg></button>
        <button class="task open" aria-label="Chrome"><svg viewBox="0 0 36 36"><circle cx="18" cy="18" r="15" fill="#fbc51c"/><path d="M18 18L5 10.500A15 15 0 0 1 31 10.500H18z" fill="#dd4b3e"/><path d="M5 10.500A15 15 0 0 0 17 33l6-10-5-5z" fill="#1da05a"/><path d="M5 10.500A15 15 0 0 1 31 10.500H18l-4 3-3 6z" fill="#dd4b3e"/><circle cx="18" cy="18" r="7" fill="#fff"/><circle cx="18" cy="18" r="5.500" fill="#4688f1"/></svg></button>
        <button class="task" aria-label="Explorer"><svg viewBox="0 0 36 36"><path d="M3 5h8l2 2h20v24H3z" fill="#f0d27a" stroke="#b99a45"/><path d="M5 10h26v20H5z" fill="#fbeaa6"/><path d="M6 5h5v2H6z" fill="#30b040"/><path d="M14 7h5v2h-5z" fill="#d04040"/><path d="M23 9h6v2h-6z" fill="#3080d0"/><path d="M7 32V22h22v10h-5v-5H12v5z" fill="#8fd3f0" stroke="#4a9dc4"/></svg></button>
        <button class="task" aria-label="PES 2016"><svg viewBox="0 0 36 36"><path d="M2 2h32v32H2z" fill="#231a08"/><path d="M2 2h12L2 18z" fill="#c89020"/><path d="M4 2l6 0-8 22v-9z" fill="#f0c850"/><path d="M15 13l6-2 7 4 3 9-5 2v8H15l-1-9-5-2z" fill="#f0c818"/><circle cx="21" cy="7" r="4" fill="#a87048"/><path d="M17 5q3-5 8 0l-1 1q-3-2-7 0z" fill="#111"/><text class="pes" x="3" y="28">PES<tspan fill="#d01818">2016</tspan></text></svg></button>
        <button class="task" aria-label="Booster"><svg viewBox="0 0 36 36"><path d="M5 16q0-7 9-8h8q7 3 6 14-4 10-14 9-9-2-9-15z" fill="#f5c8a0" stroke="#233"/><path d="M4 14q0-9 7-12l-1 4q5-3 16 2 3 3 1 8-10-4-18-1z" fill="#14505e"/><path d="M7 17q10-3 20 0v6q-8 3-10-1-3 3-8 2z" fill="#123848"/><circle cx="12" cy="20" r="2" fill="#fff"/><path d="M10 26q4 3 8 0" stroke="#722" fill="none"/><use href="#shield" x="19" y="17" width="14" height="16"/></svg></button>
        <button class="task" aria-label="Converter"><svg viewBox="0 0 36 36"><rect x="5" y="5" width="26" height="26" rx="2" fill="#e0463e" stroke="#ddd" stroke-width="2"/><path d="M9 17q1-7 9-7V6l8 6-8 5v-4q-5 0-9 4zM27 19q-1 7-9 7v4l-8-6 8-5v4q5 0 9-4z" fill="#fff"/></svg></button>
        <button class="task" aria-label="Script"><svg viewBox="0 0 36 36"><path d="M6 3h19l6 6v24H6z" fill="#fff" stroke="#555"/><path d="M25 3v6h6" fill="#ccc" stroke="#333"/><path d="M10 11h17v15H10z" fill="#fff" stroke="#000" stroke-width="2"/><path d="M10 10h17v3H10z" fill="#000080"/><text class="oka" x="11" y="21"><tspan fill="#c01010">o</tspan><tspan fill="#1010c0">k</tspan><tspan fill="#108040">a</tspan></text></svg></button>
        <button class="task" aria-label="Viber"><svg viewBox="0 0 36 36"><path d="M12 3h12q9 1 9 13 0 11-9 12h-5l-6 6v-6Q4 27 4 16 4 4 12 3z" fill="#7d51a0" stroke="#eee" stroke-width="2"/><path d="M12 9l3 4-2 3q2 5 6 6l3-2 4 3q-1 5-5 3-9-3-12-13 0-4 3-4z" fill="#fff"/><path d="M19 8q7 1 7 8M19 11q4 1 4 5M19 14q2 0 2 2" stroke="#fff" fill="none"/></svg></button>
        <button class="task open" aria-label="Skype"><svg viewBox="0 0 36 36"><circle cx="12" cy="12" r="9" fill="#00aff0"/><circle cx="24" cy="24" r="9" fill="#0a9bdc"/><circle cx="18" cy="18" r="14" fill="#00a8ea"/><text class="skype" x="18" y="26">S</text></svg></button>
        <button class="task open" aria-label="Wi-Fi sharing"><svg viewBox="0 0 36 36"><path d="M5 9q13-10 26 0M9 14q9-7 18 0M13 19q5-4 10 0" stroke="#3d84c6" stroke-width="3" fill="none"/><path d="M6 33l2-9q3-3 8-1h4l11-3-1 3-4 4-4 3h-9l-2 3z" fill="#333"/></svg></button>
        <button class="task open" aria-label="PDF"><svg viewBox="0 0 36 36"><rect x="2" y="2" width="32" height="32" rx="2" fill="#f07d00"/><path d="M5 18q2-9 7-13 0 7-3 10 8-10 14-10-6 4-8 11M20 9h11v22H5v-9" stroke="#fff" fill="none"/><text class="pdf" x="7" y="29">PDF</text></svg></button>
        <button class="task open" aria-label="Gauge"><svg viewBox="0 0 36 36"><circle cx="17" cy="17" r="14" fill="#eeebe5" stroke="#777" stroke-width="2"/><path d="M9 24q-4-12 8-15 11 1 10 11" stroke="#888" stroke-dasharray="1 3" stroke-width="3" fill="none"/><path d="M13 8l7 13-3 1z" fill="#c02020"/><use href="#shield" x="19" y="18" width="14" height="16"/></svg></button>
        <button class="task open" aria-label="Word"><svg viewBox="0 0 36 36"><path d="M18 6h14v24H18z" fill="#fff" stroke="#2b579a"/><path d="M21 10h9M21 14h9M21 18h9M21 22h9M21 26h9" stroke="#2b579a"/><path d="M3 6l17-3v30L3 30z" fill="#2b579a"/><text class="word" x="5" y="23">W</text></svg></button>
        <button class="task open" aria-label="VMware"><svg viewBox="0 0 36 36"><path d="M10 6l3-3h18l2 2v19l-3 3H10z" fill="#3a9cba" stroke="#16728a"/><path d="M14 10h12v12H14z" fill="#c8dbe8"/><path d="M4 12l3-3h13v5H10v13h10v-6h6v9l-2 3H4z" fill="#f5a01e" stroke="#b96a08"/><path d="M20 9h6v5h-6z" fill="#f5a01e"/></svg></button>
        <button class="task open active" aria-label="HYSYS"><svg viewBox="0 0 36 36"><path d="M19 3h14v24H21z" fill="#fff" stroke="#555500" stroke-width="2"/><path d="M22 8h8M22 11h8M22 14h8M22 17h8" stroke="#333"/><path d="M2 11l26 12L2 34z" fill="#00807a"/><path d="M2 11l26 12-23-4z" fill="#fff"/><path d="M8 4l14 14" stroke="#000" stroke-width="5"/><path d="M8 4l13 13" stroke="#d8e830" stroke-width="2"/></svg></button>
        <button class="task open" aria-label="Paint"><svg viewBox="0 0 36 36"><path d="M3 22q0-9 10-13t18 2q4 5-4 9-4 2-2 6-2 5-9 6Q4 32 3 22z" fill="#a8cfe8" stroke="#6a9cc0"/><circle cx="9" cy="20" r="3" fill="#e04040"/><circle cx="14" cy="14" r="3" fill="#60b040"/><circle cx="21" cy="12" r="3" fill="#f0c030"/><circle cx="17" cy="22" r="3" fill="#4070d0"/><path d="M18 34l12-26" stroke="#d88830" stroke-width="3"/><path d="M28 9l3-6 5-1-4 9z" fill="#9a6840"/></svg></button>

        <div class="tray">
            <button aria-label="Show hidden icons"><svg width="8" height="5" viewBox="0 0 8 5"><path d="M0 5h8L4 0z" fill="#fff"/></svg></button>
            <button aria-label="Action center"><svg width="16" height="16" viewBox="0 0 16 16"><path d="M2 1v14" stroke="#fff" stroke-width="2"/><path d="M4 2h5l1 2h5l-2 3 1 2H9L8 8H4z" fill="#fff"/></svg></button>
            <button aria-label="Power"><svg width="16" height="16" viewBox="0 0 16 16"><path d="M2 2h7v12H2z" fill="none" stroke="#fff" stroke-width="2"/><path d="M7 6h8v3l-2 3H9L7 9zM9 2v4M13 2v4M11 12v3" fill="#fff" stroke="#fff" stroke-width="1"/></svg></button>
            <button aria-label="Network"><svg width="16" height="14" viewBox="0 0 16 14"><path d="M0 11h2v3H0zM3 9h2v5H3zM6 7h2v7H6zM9 4h2v10H9zM13 0h2v14h-2z" fill="#fff"/></svg></button>
            <button aria-label="Volume"><svg width="16" height="14" viewBox="0 0 16 14"><path d="M1 4h3l4-3v12l-4-3H1z" fill="#ccc" stroke="#fff"/><path d="M10 4q2 3 0 6M12 2q4 5 0 10" stroke="#fff" fill="none"/></svg></button>
            <button aria-label="Download manager"><svg width="16" height="16" viewBox="0 0 16 16"><ellipse cx="7" cy="9" rx="7" ry="4" fill="#d8a020"/><circle cx="9" cy="6" r="5" fill="#3b78c8"/><path d="M5 3q3-3 6-1l-3 4z" fill="#e8d840"/><path d="M5 8h4V6l6 4-6 5v-3H5z" fill="#209830"/></svg></button>
            <time class="clock">18:03<br>12/05/2016</time>
            <button class="peek" aria-label="Show desktop"></button>
        </div>
    </div>
</body>
</html>
```

FILE: styles.css
```css
* {
    box-sizing: border-box;
}

body {
    margin: 0;
    height: 100vh;
    display: flex;
    flex-direction: column;
    position: relative;
    overflow: hidden;
    font-family: "Open Sans", "Noto Sans", sans-serif;
    font-size: 12px;
    color: #111;
    background: #7c94ae;
}

button {
    padding: 0;
    margin: 0;
    border: 0;
    background: none;
    font: inherit;
    color: inherit;
}

h1,
h2 {
    margin: 0;
    font-size: 12px;
    font-weight: 400;
}

svg {
    display: block;
    flex: none;
}

.defs {
    position: absolute;
}

/* Line styles shared by the icons */
.px {
    shape-rendering: crispEdges;
}

.ink {
    fill: none;
    stroke: #000;
}

.pipe {
    fill: none;
    stroke: #0000d8;
}

.hot {
    fill: none;
    stroke: #e01010;
}

.sig {
    fill: none;
    stroke: #008000;
}

.unit {
    fill: #808080;
    stroke: #000;
}

.tower {
    fill: #fff;
    stroke: #000;
}

.cold-dot {
    fill: #0000c0;
    stroke: #000080;
}

.hot-dot {
    fill: #d01010;
    stroke: #700;
}

.gdot,
.bdot,
.odot {
    fill: none;
    stroke: #30a030;
    stroke-width: 2;
    stroke-dasharray: 1 1;
}

.bdot {
    stroke: #5050c0;
}

.odot {
    stroke: #a0a020;
}

/* Main window */
.window {
    flex: 1;
    min-height: 0;
    display: flex;
    flex-direction: column;
    border: 2px solid #fbb4f8;
    border-top-width: 3px;
    background: #f0f0f0;
}

.titlebar {
    height: 19px;
    display: flex;
    align-items: center;
    gap: 4px;
    padding-left: 1px;
    border-bottom: 1px solid #5a6b80;
    background: linear-gradient(to right, #d5e1ee 0, #c4d6e8 220px, #a0bedc 280px, #a0bedc 75%, #b4cde4);
}

.titlebar h1 {
    line-height: 14px;
    padding-bottom: 3px;
}

.caption {
    margin-left: auto;
    align-self: flex-start;
    display: flex;
    height: 15px;
    border: 1px solid #4b5e74;
    border-top: 0;
    border-radius: 0 0 5px 5px;
    overflow: hidden;
}

.cap-btn {
    width: 28px;
    display: flex;
    justify-content: center;
    border-right: 1px solid #4b5e74;
    background: linear-gradient(#d3e0ee, #9fb6cf 50%, #b9cde1);
}

.cap-btn.close {
    width: 46px;
    border-right: 0;
    background: linear-gradient(#e0a090, #c4452c 45%, #d0583c);
}

.menubar {
    height: 21px;
    display: flex;
    align-items: center;
    gap: 14px;
    padding-left: 5px;
    border-bottom: 2px solid #8a8a92;
    background: linear-gradient(#fff, #e9edf7 45%, #d8deef 50%, #dfe4f3);
}

.toolbar {
    height: 27px;
    padding-bottom: 3px;
    display: flex;
    align-items: center;
    gap: 4px;
    background: #f0f0f0;
}

.tool {
    width: 22px;
    height: 22px;
    display: flex;
    align-items: center;
    justify-content: center;
    flex: none;
}

.tool svg {
    width: 20px;
    height: 20px;
}

.tool.pressed {
    background: #dcdcdc;
    border: 1px solid;
    border-color: #888 #fff #fff #888;
}

.tool.letter {
    font-family: "Liberation Serif", serif;
    font-size: 24px;
    line-height: 22px;
    color: #000;
}

.sep {
    width: 2px;
    height: 23px;
    margin-left: 5px;
    border-left: 1px solid #999;
    border-right: 1px solid #fff;
    flex: none;
}

.env {
    margin-left: auto;
    margin-right: 69px;
    text-align: right;
    font-family: "Liberation Sans", sans-serif;
    font-size: 11px;
    line-height: 12px;
}

/* Child window */
.child {
    flex: 1;
    min-height: 0;
    display: flex;
    flex-direction: column;
    padding: 0 6px 6px;
    border-top: 2px solid #555;
    border-bottom: 2px solid #1d4650;
    background: #b9d1ea;
}

.child-title {
    height: 28px;
    margin: 0 -6px;
    padding: 5px 9px 0;
    display: flex;
    align-items: center;
    gap: 7px;
    background: linear-gradient(#99b4d1, #b9d1ea);
}

.child-body {
    flex: 1;
    min-height: 0;
    display: flex;
    flex-direction: column;
    background: #f0f0f0;
}

.pfd-toolbar {
    height: 32px;
    padding: 0 7px 6px;
}

.pfd-toolbar .sep {
    margin-left: 4px;
}

.scheme {
    margin-left: auto;
    display: flex;
    align-items: center;
    gap: 12px;
}

.scheme select {
    width: 150px;
    height: 20px;
    padding: 0 3px;
    border: 2px solid;
    border-color: #777 #fff #fff #777;
    border-radius: 0;
    background: #e4e4e4;
    color: #0000d0;
    font-family: "Liberation Sans", sans-serif;
    font-size: 11px;
    appearance: none;
}

.canvas {
    flex: 1;
    min-height: 0;
    position: relative;
    margin: 0 4px;
    border-left: 2px solid #666;
    border-top: 2px solid #666;
    background: #008080;
    overflow: hidden;
}

.flow {
    position: absolute;
    left: 446px;
    top: 56px;
}

.stream {
    fill: none;
    stroke: #0000f0;
    stroke-width: 2;
}

.inner {
    fill: none;
    stroke: #0010ff;
}

.energy {
    fill: none;
    stroke: #701850;
    stroke-width: 2;
}

.energy.thin {
    stroke-width: 1;
}

.head {
    fill: #0000ff;
}

.qhead {
    fill: #800040;
}

.frame {
    fill: none;
    stroke: #000;
    stroke-width: 2;
}

.labels {
    font-family: "Liberation Sans", Arial, sans-serif;
    font-size: 21px;
    fill: #fff;
}

.hscroll {
    height: 17px;
    margin: 0 4px;
    display: flex;
    border-left: 2px solid #666;
}

.hscroll button {
    width: 25px;
    display: flex;
    align-items: center;
    justify-content: center;
    background: #f0f0f0;
    border: 1px solid;
    border-color: #fff #777 #777 #fff;
}

.hscroll .overview {
    background: #ccc;
}

.hscroll .small {
    width: 17px;
}

.track {
    flex: 1;
    background: #c0c0c0;
}

.thumb {
    display: block;
    width: 17px;
    height: 17px;
    margin-left: 47.600%;
    background: #f0f0f0;
    border: 1px solid;
    border-color: #fff #777 #777 #fff;
}

.tabs {
    height: 30px;
    margin-top: 2px;
    padding-left: 22px;
    background: linear-gradient(#888 0 1px, #f0f0f0 1px 3px, #666 3px 5px, #f0f0f0 5px 6px, #777 6px 8px, #f0f0f0 8px);
}

.tab {
    height: 25px;
    margin-top: 3px;
    padding: 0 6px 0 3px;
    border-right: 2px solid #777;
    border-bottom: 2px solid #777;
    border-radius: 0 0 5px 5px;
    background: #f0f0f0;
    font-weight: 700;
    color: #000;
}

/* Message and trace panes */
.panes {
    height: 54px;
    padding-top: 4px;
    display: flex;
    gap: 2px;
    background: #f0f0f0;
}

.pane {
    flex: 1;
    border: 1px solid #ddd;
    border-top: 2px solid #777;
    border-right-color: #bbb;
    background: #fff;
    overflow: hidden;
}

.trace {
    position: relative;
    padding-left: 3px;
    border-left: 2px solid #777;
    font-family: "Liberation Mono", "Courier New", monospace;
    font-size: 12px;
    line-height: 14px;
    color: #000;
    white-space: nowrap;
}

.trace .line:first-child {
    margin-top: -9px;
}

.cols {
    display: grid;
    grid-template-columns: 70px 28px 119px 112px 161px 1fr;
    padding-left: 21px;
}

.indent {
    display: flex;
    gap: 17px;
    padding-left: 21px;
}

.vdown {
    position: absolute;
    right: 0;
    bottom: 0;
    width: 14px;
    height: 16px;
    background: #f0f0f0;
    display: flex;
    align-items: center;
    justify-content: center;
}

.status {
    height: 23px;
    padding-top: 2px;
    display: flex;
    gap: 4px;
}

.cell {
    border: 1px solid;
    border-color: #888 #aaa #fff #aaa;
}

.short {
    width: 117px;
}

.wide {
    flex: 1;
}

.arrows {
    width: 108px;
    padding: 3px 5px;
}

.marker {
    position: absolute;
    right: 118px;
    top: 5px;
}

/* Object palette floats above the main window */
.palette {
    position: absolute;
    right: 4px;
    top: 49px;
    width: 117px;
    padding: 0 4px 4px;
    border: 2px solid #f3a4ee;
    background: linear-gradient(#c3d7eb, #cfe0f2);
}

.palette-title {
    height: 22px;
    padding-left: 2px;
    display: flex;
    align-items: center;
    justify-content: space-between;
}

.palette-close {
    width: 16px;
    height: 15px;
    display: flex;
    align-items: center;
    justify-content: center;
    border: 1px solid #7a3428;
    border-radius: 2px;
    background: linear-gradient(#e09a88, #c0452e);
}

.palette-body {
    border: 1px solid #000;
    border-top-width: 2px;
    border-left-width: 2px;
    background: #f0f0f0;
}

.palette-body button {
    display: flex;
}

.group {
    display: grid;
    grid-template-columns: repeat(3, 33px);
    border-bottom: 1px solid #999;
}

.edit {
    grid-template-rows: 22px;
}

.streams {
    grid-template-columns: 1fr 1fr;
    grid-template-rows: 23px;
}

.streams button {
    align-items: center;
    justify-content: center;
}

.units {
    grid-template-rows: 31px 31px 31px 32px 32px 32px 32px 33px 36px;
}

.columns {
    grid-template-rows: repeat(3, 32px);
    padding: 2px 0;
}

.logical {
    grid-template-rows: 24px 36px 36px 33px 33px;
    border-bottom: 0;
}

.pair {
    grid-column: 1 / 4;
    display: flex;
    align-items: center;
    justify-content: space-between;
    padding: 2px 10px 0;
}

.palette-body .sheet {
    display: block;
    padding: 1px 2px;
    border: 1px solid #000;
    background: #fff;
    font-family: "Liberation Mono", monospace;
    font-size: 8px;
    line-height: 7px;
    font-weight: 700;
}

.glyph {
    font-family: "Liberation Serif", serif;
    font-size: 15px;
    font-weight: 700;
}

.green-letter {
    fill: #10e030;
    font-family: "Liberation Sans", sans-serif;
    font-size: 14px;
    font-weight: 700;
    text-anchor: middle;
}

/* Taskbar */
.taskbar {
    height: 40px;
    flex: none;
    display: flex;
    gap: 2px;
    border-top: 1px solid #33475c;
    background:
        linear-gradient(to right, #2a4f73 0, transparent 30px, transparent 1040px, rgba(70, 88, 108, 0.6) 1090px),
        linear-gradient(#8499b0, #7d95af 45%, #a6c6e8 70%, #a9c9ea);
}

.start {
    width: 57px;
    padding-left: 8px;
    display: flex;
    align-items: center;
}

.task {
    width: 60px;
    display: flex;
    align-items: center;
    justify-content: center;
    border: 1px solid transparent;
    border-radius: 3px;
}

.task svg {
    width: 35px;
    height: 35px;
}

.task.open {
    border-color: #3d536b;
    box-shadow: inset 0 0 0 1px rgba(255, 255, 255, 0.5);
    background: linear-gradient(to bottom right, #c8d3df, #9fb1c5 45%, #b5cbe3);
}

.task.active {
    background: linear-gradient(to bottom right, #f0f4f8, #c8d5e2 50%, #d8e4ef);
}

.tray {
    margin-left: auto;
    display: flex;
    align-items: center;
    gap: 8px;
    color: #fff;
}

.clock {
    width: 77px;
    padding-right: 4px;
    text-align: center;
    line-height: 17px;
    font-family: Roboto, "Open Sans", sans-serif;
}

.peek {
    width: 14px;
    align-self: stretch;
    border-left: 1px solid #44566a;
    background: linear-gradient(to right, #a9bccf, #6f8499);
}

.pes {
    fill: #fff;
    font: italic 700 8px "Liberation Sans", sans-serif;
}

.oka {
    font: 700 8px "Liberation Mono", monospace;
}

.skype {
    fill: #fff;
    font: 700 23px "Liberation Sans", sans-serif;
    text-anchor: middle;
}

.pdf {
    fill: #fff;
    font: 700 11px "Open Sans", sans-serif;
}

.word {
    fill: #fff;
    font: 700 13px "Open Sans", sans-serif;
}
```
